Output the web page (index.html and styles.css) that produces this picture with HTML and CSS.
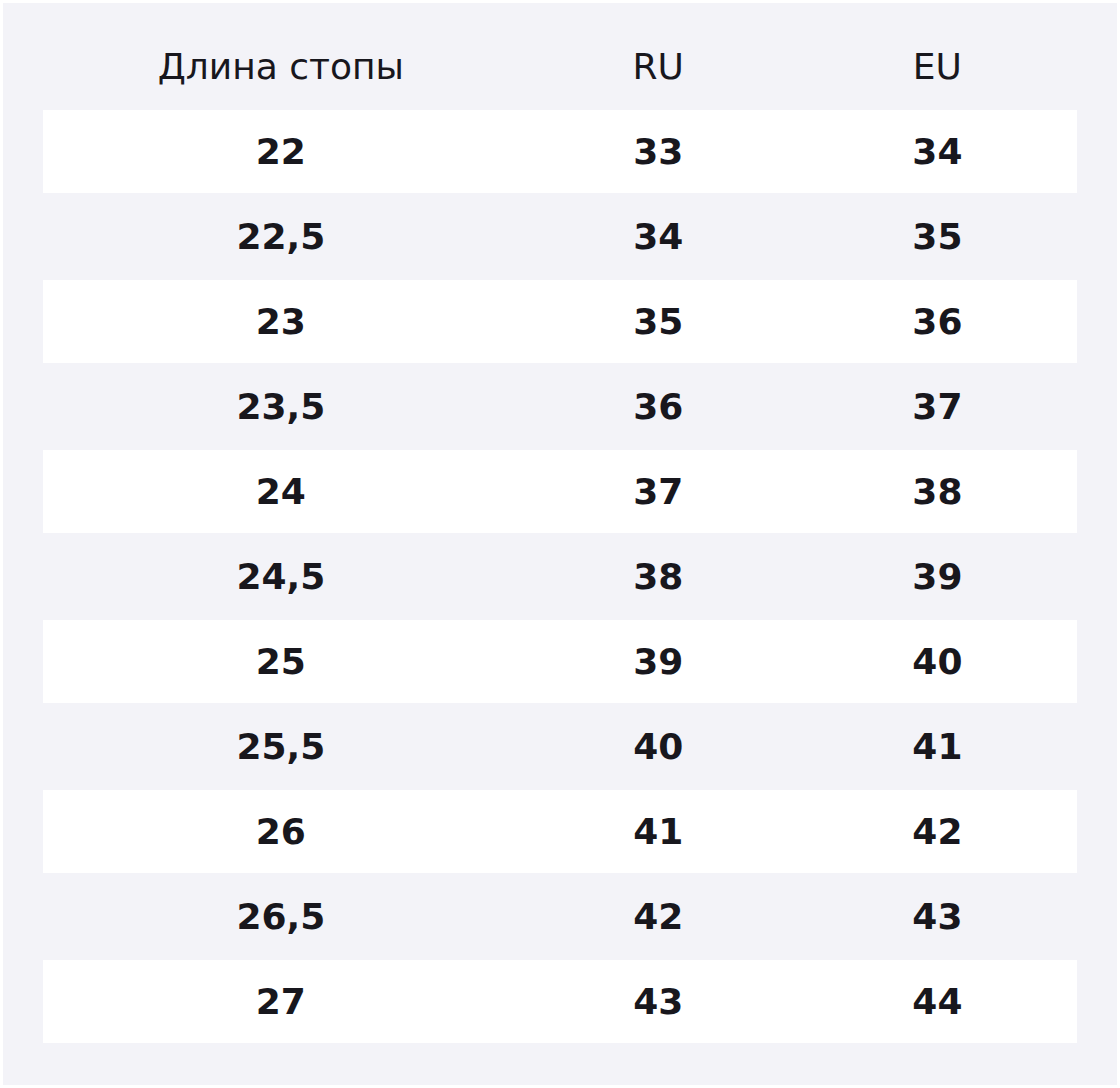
FILE: index.html
```html
<!DOCTYPE html>
<html lang="ru">
<head>
<meta charset="utf-8">
<title>Таблица размеров</title>
<link rel="stylesheet" href="styles.css">
</head>
<body>
<div class="panel">
  <table class="sizes">
    <colgroup>
      <col class="c-len">
      <col class="c-ru">
      <col class="c-eu">
    </colgroup>
    <thead>
      <tr><th>Длина стопы</th><th>RU</th><th>EU</th></tr>
    </thead>
    <tbody>
      <tr class="odd"><td>22</td><td>33</td><td>34</td></tr>
      <tr><td>22,5</td><td>34</td><td>35</td></tr>
      <tr class="odd"><td>23</td><td>35</td><td>36</td></tr>
      <tr><td>23,5</td><td>36</td><td>37</td></tr>
      <tr class="odd"><td>24</td><td>37</td><td>38</td></tr>
      <tr><td>24,5</td><td>38</td><td>39</td></tr>
      <tr class="odd"><td>25</td><td>39</td><td>40</td></tr>
      <tr><td>25,5</td><td>40</td><td>41</td></tr>
      <tr class="odd"><td>26</td><td>41</td><td>42</td></tr>
      <tr><td>26,5</td><td>42</td><td>43</td></tr>
      <tr class="odd"><td>27</td><td>43</td><td>44</td></tr>
    </tbody>
  </table>
</div>
</body>
</html>
```
FILE: styles.css
```css
html, body {
  margin: 0;
  padding: 0;
  background: #ffffff;
}
body {
  padding: 3px;
  font-family: "DejaVu Sans", "Liberation Sans", sans-serif;
  color: #18171d;
}
.panel {
  background: #f3f3f8;
  padding: 20px 40px 40px;
}
.sizes {
  width: 100%;
  border-collapse: separate;
  border-spacing: 0 2px;
  table-layout: fixed;
}
.c-len { width: 46%; }
.c-ru { width: 27%; }
.c-eu { width: 27%; }
.sizes th,
.sizes td {
  height: 83px;
  padding: 0;
  text-align: center;
  vertical-align: middle;
  font-size: 36px;
  line-height: 1;
}
.sizes th {
  font-weight: normal;
}
.sizes td {
  font-weight: bold;
}
.sizes tr.odd td {
  background: #ffffff;
}
```
